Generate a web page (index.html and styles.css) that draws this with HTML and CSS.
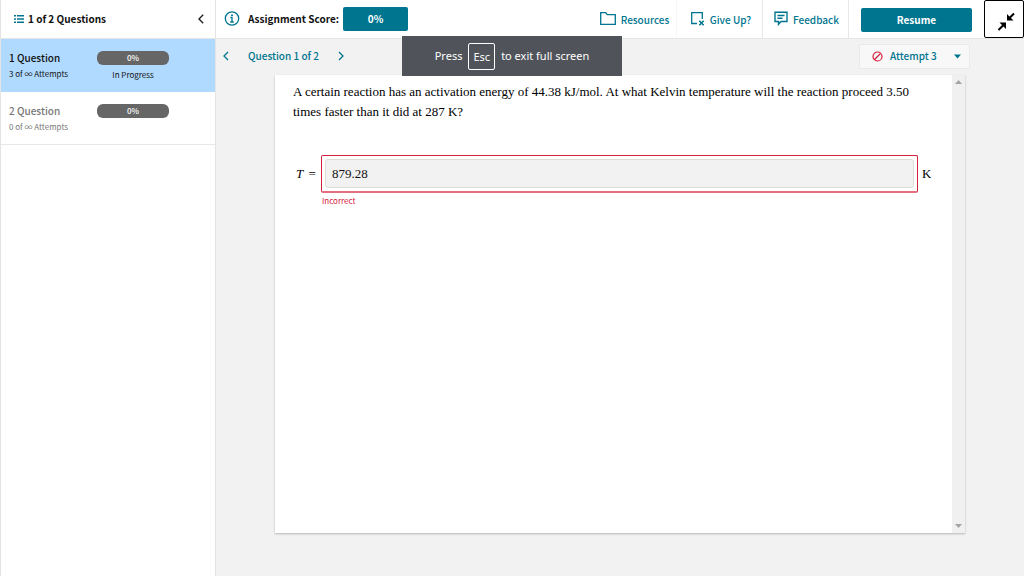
FILE: index.html
```html
<!DOCTYPE html>
<html lang="en">
<head>
<meta charset="UTF-8">
<meta name="viewport" content="width=device-width, initial-scale=1.0">
<title>Assignment</title>
<link rel="stylesheet" href="styles.css">
</head>
<body>

<aside class="sidebar">
  <div class="sidebar-header">
    <svg width="10" height="10" viewBox="0 0 10 10" fill="#00758f">
      <path d="M0 1h2v1.5H0zM3 1h7v1.5H3zM0 4.2h2v1.6H0zM3 4.2h7v1.6H3zM0 7.5h2V9H0zM3 7.5h7V9H3z"/>
    </svg>
    <h1>1 of 2 Questions</h1>
    <button class="collapse" aria-label="Collapse">
      <svg width="6" height="10" viewBox="0 0 6 10" fill="none" stroke="#222" stroke-width="1.4"><path d="M5.2 .8L1 5l4.2 4.2"/></svg>
    </button>
  </div>
  <ul class="question-list">
    <li class="question-item active">
      <div class="question-name">
        <a href="#q1">1 Question</a>
        <span>3 of ∞ Attempts</span>
      </div>
      <div class="question-status">
        <span class="pill">0%</span>
        <span>In Progress</span>
      </div>
    </li>
    <li class="question-item">
      <div class="question-name">
        <a href="#q2">2 Question</a>
        <span>0 of ∞ Attempts</span>
      </div>
      <div class="question-status">
        <span class="pill">0%</span>
      </div>
    </li>
  </ul>
</aside>

<main class="main">
  <header class="topbar">
    <div class="score">
      <svg width="16" height="16" viewBox="0 0 16 16" fill="none" stroke="#00758f" stroke-width="1.3">
        <circle cx="8" cy="7.5" r="6.7"/>
        <path d="M6.5 6.5H8V11M6.2 11h3.6"/>
        <circle cx="8" cy="4.2" r=".4"/>
      </svg>
      <span class="score-label">Assignment Score:</span>
      <span class="score-value">0%</span>
    </div>
    <nav class="actions">
      <a class="action plain" href="#resources">
        <svg width="16" height="18" viewBox="0 0 16 18" fill="none" stroke="#00758f" stroke-width="1.3"><path d="M.7 13.3V1.7h5l1.5 2h8.1v9.6z"/></svg>
        Resources
      </a>
      <a class="action plain" href="#giveup">
        <svg width="15" height="18" viewBox="0 0 15 18" fill="none" stroke="#00758f"><path stroke-width="1.3" d="M7 12.5H1.7V1.7h10.6V8"/><path stroke-width="1.6" d="M9.3 9.8l4.4 4.4M13.7 9.8l-4.4 4.4"/></svg>
        Give Up?
      </a>
      <a class="action" href="#feedback">
        <svg width="14" height="18" viewBox="0 0 14 18" fill="none" stroke="#00758f" stroke-width="1.4"><path d="M1 1.2h12v9.3H7l-2.5 2.8v-2.8H1zM3.5 4.5h7M3.5 7.2h5"/></svg>
        Feedback
      </a>
    </nav>
    <button class="resume">Resume</button>
    <button class="fullscreen" aria-label="Exit full screen">
      <svg width="20" height="20" viewBox="0 0 20 20" fill="#000" stroke="#000">
        <path stroke="none" d="M11 3v6.500h6.500zM3.500 11.500H10V18z"/>
        <path stroke-width="2" d="M12.500 8l5.500-5.500M8.500 13l-6 6"/>
      </svg>
    </button>
  </header>

  <div class="toolbar">
    <nav class="pager">
      <button aria-label="Previous question">
        <svg width="6" height="10" viewBox="0 0 6 10" fill="none" stroke="#00758f" stroke-width="1.3"><path d="M5 1L1 5l4 4"/></svg>
      </button>
      <span>Question 1 of 2</span>
      <button aria-label="Next question">
        <svg width="6" height="10" viewBox="0 0 6 10" fill="none" stroke="#00758f" stroke-width="1.3"><path d="M1 1l4 4-4 4"/></svg>
      </button>
    </nav>
    <div class="attempt">
      <svg width="11" height="11" viewBox="0 0 11 11" fill="none" stroke="#d5203b" stroke-width="1.2"><circle cx="5.5" cy="5.5" r="4.5"/><path d="M2.5 8.5l6-6"/></svg>
      <select aria-label="Attempt">
        <option>Attempt 3</option>
      </select>
      <svg width="7" height="5" viewBox="0 0 7 5" fill="#00758f"><path d="M0 .5h7L3.5 4.5z"/></svg>
    </div>
  </div>

  <section class="card">
    <div class="card-body">
      <p class="prompt">A certain reaction has an activation energy of 44.38 kJ/mol. At what Kelvin temperature will the reaction proceed 3.50 times faster than it did at 287 K?</p>
      <div class="answer">
        <label for="answer"><i>T</i> =</label>
        <div class="answer-box">
          <input id="answer" type="text" value="879.28" readonly>
        </div>
        <span class="unit">K</span>
      </div>
      <p class="result">Incorrect</p>
    </div>
    <div class="scrollbar">
      <svg width="7" height="4" viewBox="0 0 7 4" fill="#a3a3a3"><path d="M0 4h7L3.5 0z"/></svg>
      <svg width="7" height="4" viewBox="0 0 7 4" fill="#a3a3a3"><path d="M0 0h7L3.5 4z"/></svg>
    </div>
  </section>
</main>

<div class="esc-banner">Press <kbd>Esc</kbd> to exit full screen</div>

</body>
</html>
```

FILE: styles.css
```css
* {
  box-sizing: border-box;
}
body {
  margin: 0;
  display: flex;
  min-height: 100vh;
  background: #f2f2f2;
  color: #111;
  font-family: "Noto Sans CJK SC", "Noto Sans", sans-serif;
  font-size: 10px;
  line-height: 14px;
}
h1, p, ul {
  margin: 0;
  padding: 0;
}
svg {
  display: block;
  flex: none;
}
button {
  padding: 0;
  border: none;
  background: none;
  font: inherit;
  cursor: pointer;
}
a {
  color: inherit;
  text-decoration: none;
}

/* Sidebar */
.sidebar {
  flex: none;
  width: 216px;
  background: #fff;
  border-left: 1px solid #e4e4e4;
  border-right: 1px solid #e4e4e4;
}
.sidebar-header {
  display: flex;
  align-items: center;
  height: 39px;
  padding: 0 11px 0 13px;
  border-bottom: 1px solid #e4e4e4;
}
.sidebar-header h1 {
  margin-left: 4px;
  font-size: 10px;
  font-weight: 700;
}
.collapse {
  margin-left: auto;
}
.question-list {
  list-style: none;
}
.question-item {
  display: flex;
  height: 53px;
  padding: 12px 8px;
  border-bottom: 1px solid #e8e8e8;
  color: #777;
  font-size: 8px;
}
.question-item.active {
  background: #b0daff;
  border-color: #b0daff;
  color: #111;
}
.question-name {
  display: flex;
  flex-direction: column;
  gap: 2px;
  width: 88px;
}
.question-name a {
  font-size: 10px;
  font-weight: 500;
}
.question-status {
  display: flex;
  flex-direction: column;
  align-items: center;
  gap: 3px;
  width: 72px;
}
.pill {
  width: 100%;
  height: 14px;
  border-radius: 6px;
  background: #666;
  color: #fff;
  font-weight: 500;
  text-align: center;
}

/* Top bar */
.main {
  flex: 1;
  min-width: 0;
  display: flex;
  flex-direction: column;
}
.topbar {
  display: flex;
  align-items: center;
  height: 39px;
  padding-left: 8px;
  background: #fff;
  border-bottom: 1px solid #e4e4e4;
}
.score {
  display: flex;
  align-items: center;
}
.score-label {
  margin: 0 4px 0 8px;
  font-weight: 700;
}
.score-value {
  width: 65px;
  border-radius: 2px;
  background: #00758f;
  color: #fff;
  font-weight: 700;
  line-height: 24px;
  text-align: center;
}
.actions {
  display: flex;
  align-self: stretch;
  margin-left: auto;
  color: #00758f;
  font-weight: 500;
}
.action {
  display: flex;
  align-items: center;
  justify-content: center;
  gap: 5px;
  width: 86px;
  padding: 2px 0 0 2px;
  border-right: 1px solid #e8e8e8;
}
.action.plain {
  border-right-color: #f7f7f7;
}
.action.plain + .plain {
  border-right-color: #e8e8e8;
}
.resume {
  width: 111px;
  margin: 2px 12px 0;
  border-radius: 2px;
  background: #00758f;
  color: #fff;
  font-weight: 700;
  line-height: 24px;
}
.fullscreen {
  display: grid;
  place-items: center;
  align-self: stretch;
  width: 40px;
  padding: 3px 0 0 4px;
  border: 1px solid #000;
  border-radius: 2px;
}

/* Pager and attempt picker */
.toolbar {
  display: flex;
  align-items: center;
  justify-content: space-between;
  height: 36px;
  padding: 0 54px 2px 7px;
  color: #00758f;
}
.pager {
  display: flex;
  align-items: center;
  gap: 19px;
  font-weight: 500;
}
.attempt {
  display: flex;
  align-items: center;
  width: 111px;
  height: 25px;
  padding: 0 8px 0 12px;
  background: #f8f8f8;
  border: 1px solid #e9e9e9;
  border-radius: 2px;
}
.attempt select {
  flex: 1;
  min-width: 0;
  padding: 0 0 0 7px;
  appearance: none;
  border: none;
  background: none;
  color: #00758f;
  font: inherit;
  font-weight: 500;
}

/* Question card */
.card {
  flex: 1;
  display: flex;
  margin: 0 59px 43px;
  background: #fff;
  box-shadow: 0 1px 2px rgba(0, 0, 0, 0.25);
}
.card-body {
  flex: 1;
  padding: 7px 18px;
  color: #000;
  font-family: "Liberation Serif", serif;
}
.prompt {
  font-size: 13px;
  line-height: 20px;
}
.answer {
  display: flex;
  align-items: center;
  gap: 4px;
  margin-top: 33px;
  padding-left: 3px;
  font-size: 13px;
}
.answer label {
  width: 21px;
}
.answer i {
  margin-right: 2px;
}
.answer-box {
  flex: 1;
  height: 38px;
  padding: 3px;
  border: 1px solid #d5203b;
  border-bottom: 2px solid #e4707f;
  border-radius: 2px;
}
.answer-box input {
  width: 100%;
  height: 100%;
  padding: 0 6px;
  border: 1px solid #dcdcd8;
  border-radius: 3px;
  background: #f2f2f2;
  color: #111;
  font: inherit;
}
.unit {
  width: 12px;
}
.result {
  margin: 1px 0 0 29px;
  color: #d5203b;
  font-family: "Noto Sans CJK SC", "Noto Sans", sans-serif;
  font-size: 8px;
}
.scrollbar {
  display: flex;
  flex-direction: column;
  justify-content: space-between;
  align-items: center;
  width: 13px;
  padding: 5px 0;
  background: #f0f0f0;
}

/* Full screen hint */
.esc-banner {
  position: fixed;
  top: 36px;
  left: 50%;
  display: flex;
  align-items: center;
  justify-content: center;
  gap: 6px;
  width: 220px;
  height: 40px;
  transform: translateX(-50%);
  background: #50545a;
  color: #fff;
  font-family: "Noto Sans", sans-serif;
  font-size: 11px;
}
.esc-banner kbd {
  padding: 0 4px;
  border: 1px solid #fff;
  border-radius: 2px;
  font: inherit;
  line-height: 25px;
}
```
